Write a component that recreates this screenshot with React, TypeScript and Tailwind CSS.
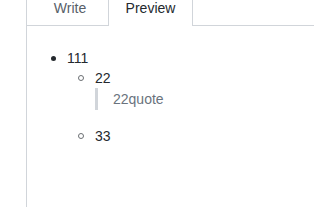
function Bullet({ kind }: { kind: 'disc' | 'circle' }) {
  return (
    <span className="flex h-[20px] w-[28px] shrink-0 items-center justify-end pr-[11px]">
      {kind === 'disc' ? (
        <span className="h-[5px] w-[5px] rounded-full bg-[#24292e]" />
      ) : (
        <span className="h-[6px] w-[6px] rounded-full border border-[#6b6f73]" />
      )}
    </span>
  )
}

export default function App() {
  return (
    <div
      className="h-[207px] w-full overflow-hidden bg-white text-[14px] text-[#24292e]"
      style={{ fontFamily: '"Liberation Sans", Arial, sans-serif' }}
    >
      <div className="ml-[26px] flex h-[220px] flex-col border-l border-[#d1d5da]">
        {/* tabs */}
        <div className="-mt-[9px] flex h-[35px]">
          <div className="flex w-[81px] items-center justify-center border-b border-[#d1d5da] pl-[5px] text-[#586069]">
            Write
          </div>
          <div className="flex w-[85px] items-center justify-center border-x border-[#d1d5da] bg-white">
            Preview
          </div>
          <div className="flex-1 border-b border-[#d1d5da]" />
        </div>

        {/* preview body */}
        <div className="pl-[12px] pt-[22px] leading-[20px]">
          <ul>
            <li className="flex">
              <Bullet kind="disc" />
              <div>
                <div>111</div>
                <ul>
                  <li className="flex">
                    <Bullet kind="circle" />
                    <div>
                      <div>22</div>
                      <blockquote className="mb-[16px] border-l-[3px] border-[#d1d5da] py-[1px] pl-[15px] text-[#6a737d]">
                        22quote
                      </blockquote>
                    </div>
                  </li>
                  <li className="flex">
                    <Bullet kind="circle" />
                    <div>33</div>
                  </li>
                </ul>
              </div>
            </li>
          </ul>
        </div>
      </div>
    </div>
  )
}
